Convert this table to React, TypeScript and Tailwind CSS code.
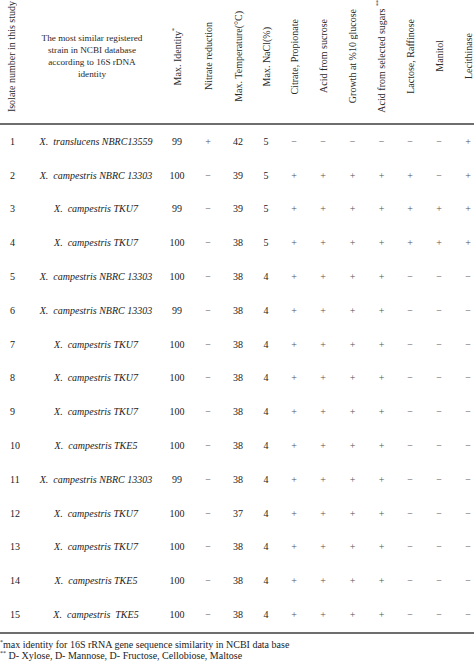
import React from "react";

const cols =
  "grid grid-cols-[30px_132px_30px_32px_28px_28px_28px_30px_29px_29px_28px_30px_28px]";

type Row = [string, string, string, string, string, string, string];

const rows: Row[] = [
  ["1", "X.  translucens NBRC13559", "99", "+", "42", "5", "------+"],
  ["2", "X.  campestris NBRC 13303", "100", "-", "39", "5", "+++++-+"],
  ["3", "X.  campestris TKU7", "99", "-", "39", "5", "+++++++"],
  ["4", "X.  campestris TKU7", "100", "-", "38", "5", "+++++++"],
  ["5", "X.  campestris NBRC 13303", "100", "-", "38", "4", "++++---"],
  ["6", "X.  campestris NBRC 13303", "99", "-", "38", "4", "++++---"],
  ["7", "X.  campestris TKU7", "100", "-", "38", "4", "++++---"],
  ["8", "X.  campestris TKU7", "100", "-", "38", "4", "++++---"],
  ["9", "X.  campestris TKU7", "100", "-", "38", "4", "++++---"],
  ["10", "X.  campestris TKE5", "100", "-", "38", "4", "++++---"],
  ["11", "X.  campestris NBRC 13303", "99", "-", "38", "4", "++++---"],
  ["12", "X.  campestris TKU7", "100", "-", "37", "4", "++++---"],
  ["13", "X.  campestris TKU7", "100", "-", "38", "4", "++++---"],
  ["14", "X.  campestris TKE5", "100", "-", "38", "4", "++++---"],
  ["15", "X.  campestris  TKE5", "100", "-", "38", "4", "++++---"],
];

const sign = (c: string) => (c === "+" ? "+" : "\u2212");

function VHead({ children }: { children: React.ReactNode }) {
  return (
    <div className="flex items-center justify-center pb-[14px]">
      <span className="[writing-mode:vertical-rl] rotate-180 whitespace-nowrap text-[10px] leading-[11px] text-[#2a2a2a]">
        {children}
      </span>
    </div>
  );
}

export default function App() {
  return (
    <div className="w-[474px] h-[663px] overflow-hidden bg-white font-['Liberation_Serif','Times_New_Roman',serif] text-[#222]">
      <div className={`${cols} h-[123px]`}>
        <div className="flex items-center justify-start pl-[6px] pb-[14px]">
          <span className="[writing-mode:vertical-rl] rotate-180 whitespace-nowrap text-[10px] leading-[11px] text-[#2a2a2a]">
            Isolate number in this study
          </span>
        </div>
        <div className="flex items-center justify-center pb-[14px] pr-[8px]">
          <p className="text-center text-[9.2px] leading-[12px] text-[#2a2a2a] whitespace-nowrap">
            The most similar registered
            <br />
            strain in NCBI database
            <br />
            according to 16S rDNA
            <br />
            identity
          </p>
        </div>
        <VHead>
          Max. Identity<span className="align-super text-[6px] leading-none">*</span>
        </VHead>
        <VHead>Nitrate reduction</VHead>
        <VHead>Max. Temperature(°C)</VHead>
        <VHead>Max. NaCl(%)</VHead>
        <VHead>Citrate, Propionate</VHead>
        <VHead>Acid from sucrose</VHead>
        <VHead>Growth at %10 glucose</VHead>
        <VHead>
          Acid from selected sugars <span className="align-super text-[6px] leading-none">**</span>
        </VHead>
        <VHead>Lactose, Raffinose</VHead>
        <VHead>Manitol</VHead>
        <VHead>Lecithinase</VHead>
      </div>

      <div className="border-t-2 border-b-2 border-[#6e6e6e]">
        {rows.map((r) => (
          <div key={r[0]} className={`${cols} h-[33.8px] items-center text-[10px] leading-[12px]`}>
            <div className="pl-[10px]">{r[0]}</div>
            <div className="text-center italic whitespace-pre">{r[1]}</div>
            <div className="text-center">{r[2]}</div>
            <div className="text-center text-[#555]">{sign(r[3])}</div>
            <div className="text-center">{r[4]}</div>
            <div className="text-center">{r[5]}</div>
            {r[6].split("").map((c, i) => (
              <div key={i} className="text-center text-[#555]">
                {sign(c)}
              </div>
            ))}
          </div>
        ))}
      </div>

      <div className="pt-[5px] text-[10px] leading-[9.5px] whitespace-nowrap">
        <div>
          <span className="align-super text-[6px] leading-none">*</span>max identity for 16S rRNA gene sequence similarity in NCBI data base
        </div>
        <div>
          <span className="align-super text-[6px] leading-none">**</span> D- Xylose, D- Mannose, D- Fructose, Cellobiose, Maltose
        </div>
      </div>
    </div>
  );
}
